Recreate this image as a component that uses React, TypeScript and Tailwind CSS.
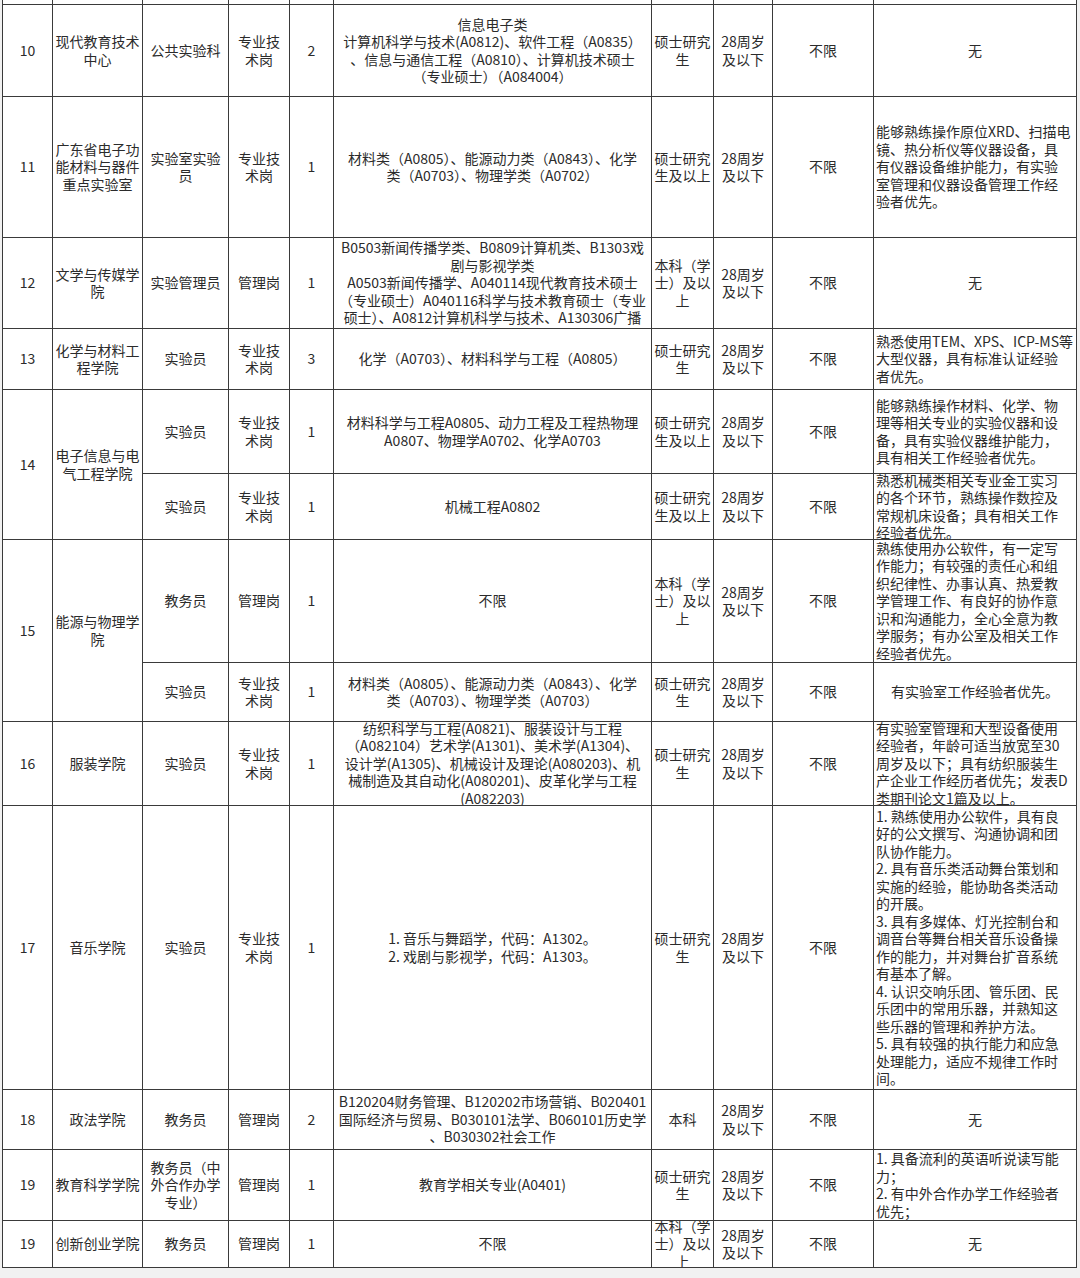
import React from "react";

type Cell = {
  lines: string[];
  align?: "center" | "left";
  span?: number;
};

type Row = Cell[];

const c = (s: string | string[], align: "center" | "left" = "center", span?: number): Cell => ({
  lines: Array.isArray(s) ? s : [s],
  align,
  span,
});

const JS = ["专业技", "术岗"];
const GL = ["管理岗"];
const SS = ["硕士研究", "生"];
const SSU = ["硕士研究", "生及以上"];
const BK = ["本科（学", "士）及以", "上"];
const AGE = ["28周岁", "及以下"];

// rows: for rowspan handling, we build explicit grid placements
type Placed = { row: number; col: number; cell: Cell };

const placed: Placed[] = [];
const put = (row: number, col: number, cell: Cell) => placed.push({ row, col, cell });

// grid rows: 1 = top sliver, 2.. = data rows
const simple = (row: number, cells: Cell[]) => cells.forEach((cell, i) => put(row, i + 1, cell));

simple(2, [
  c("10"),
  c(["现代教育技术", "中心"]),
  c("公共实验科"),
  c(JS),
  c("2"),
  c(["信息电子类", "计算机科学与技术(A0812)、软件工程（A0835）", "、信息与通信工程（A0810）、计算机技术硕士", "（专业硕士）（A084004）"]),
  c(SS),
  c(AGE),
  c("不限"),
  c("无"),
]);
simple(3, [
  c("11"),
  c(["广东省电子功", "能材料与器件", "重点实验室"]),
  c(["实验室实验", "员"]),
  c(JS),
  c("1"),
  c(["材料类（A0805）、能源动力类（A0843）、化学", "类（A0703）、物理学类（A0702）"]),
  c(SSU),
  c(AGE),
  c("不限"),
  c(["能够熟练操作原位XRD、扫描电", "镜、热分析仪等仪器设备，具", "有仪器设备维护能力，有实验", "室管理和仪器设备管理工作经", "验者优先。"], "left"),
]);
simple(4, [
  c("12"),
  c(["文学与传媒学", "院"]),
  c("实验管理员"),
  c(GL),
  c("1"),
  c(["B0503新闻传播学类、B0809计算机类、B1303戏", "剧与影视学类", "A0503新闻传播学、A040114现代教育技术硕士", "（专业硕士）A040116科学与技术教育硕士（专业", "硕士）、A0812计算机科学与技术、A130306广播"]),
  c(["本科（学", "士）及以", "上"]),
  c(AGE),
  c("不限"),
  c("无"),
]);
simple(5, [
  c("13"),
  c(["化学与材料工", "程学院"]),
  c("实验员"),
  c(JS),
  c("3"),
  c("化学（A0703）、材料科学与工程（A0805）"),
  c(SS),
  c(AGE),
  c("不限"),
  c(["熟悉使用TEM、XPS、ICP-MS等", "大型仪器，具有标准认证经验", "者优先。"], "left"),
]);
// row 14 (grid rows 6-7)
put(6, 1, c("14", "center", 2));
put(6, 2, c(["电子信息与电", "气工程学院"], "center", 2));
[
  c("实验员"),
  c(JS),
  c("1"),
  c(["材料科学与工程A0805、动力工程及工程热物理", "A0807、物理学A0702、化学A0703"]),
  c(SSU),
  c(AGE),
  c("不限"),
  c(["能够熟练操作材料、化学、物", "理等相关专业的实验仪器和设", "备，具有实验仪器维护能力，", "具有相关工作经验者优先。"], "left"),
].forEach((cell, i) => put(6, i + 3, cell));
[
  c("实验员"),
  c(JS),
  c("1"),
  c("机械工程A0802"),
  c(SSU),
  c(AGE),
  c("不限"),
  c(["熟悉机械类相关专业金工实习", "的各个环节，熟练操作数控及", "常规机床设备；具有相关工作", "经验者优先。"], "left"),
].forEach((cell, i) => put(7, i + 3, cell));
// row 15 (grid rows 8-9)
put(8, 1, c("15", "center", 2));
put(8, 2, c(["能源与物理学", "院"], "center", 2));
[
  c("教务员"),
  c(GL),
  c("1"),
  c("不限"),
  c(BK),
  c(AGE),
  c("不限"),
  c(["熟练使用办公软件，有一定写", "作能力；有较强的责任心和组", "织纪律性、办事认真、热爱教", "学管理工作、有良好的协作意", "识和沟通能力，全心全意为教", "学服务；有办公室及相关工作", "经验者优先。"], "left"),
].forEach((cell, i) => put(8, i + 3, cell));
[
  c("实验员"),
  c(JS),
  c("1"),
  c(["材料类（A0805）、能源动力类（A0843）、化学", "类（A0703）、物理学类（A0703）"]),
  c(SS),
  c(AGE),
  c("不限"),
  c("有实验室工作经验者优先。"),
].forEach((cell, i) => put(9, i + 3, cell));
simple(10, [
  c("16"),
  c("服装学院"),
  c("实验员"),
  c(JS),
  c("1"),
  c(["纺织科学与工程(A0821)、服装设计与工程", "（A082104）艺术学(A1301)、美术学(A1304)、", "设计学(A1305)、机械设计及理论(A080203)、机", "械制造及其自动化(A080201)、皮革化学与工程", "(A082203)"]),
  c(SS),
  c(AGE),
  c("不限"),
  c(["有实验室管理和大型设备使用", "经验者，年龄可适当放宽至30", "周岁及以下；具有纺织服装生", "产企业工作经历者优先；发表D", "类期刊论文1篇及以上。"], "left"),
]);
simple(11, [
  c("17"),
  c("音乐学院"),
  c("实验员"),
  c(JS),
  c("1"),
  c(["1. 音乐与舞蹈学，代码：A1302。", "2. 戏剧与影视学，代码：A1303。"]),
  c(SS),
  c(AGE),
  c("不限"),
  c([
    "1. 熟练使用办公软件，具有良",
    "好的公文撰写、沟通协调和团",
    "队协作能力。",
    "2. 具有音乐类活动舞台策划和",
    "实施的经验，能协助各类活动",
    "的开展。",
    "3. 具有多媒体、灯光控制台和",
    "调音台等舞台相关音乐设备操",
    "作的能力，并对舞台扩音系统",
    "有基本了解。",
    "4. 认识交响乐团、管乐团、民",
    "乐团中的常用乐器，并熟知这",
    "些乐器的管理和养护方法。",
    "5. 具有较强的执行能力和应急",
    "处理能力，适应不规律工作时",
    "间。",
  ], "left"),
]);
simple(12, [
  c("18"),
  c("政法学院"),
  c("教务员"),
  c(GL),
  c("2"),
  c(["B120204财务管理、B120202市场营销、B020401", "国际经济与贸易、B030101法学、B060101历史学", "、B030302社会工作"]),
  c("本科"),
  c(AGE),
  c("不限"),
  c("无"),
]);
simple(13, [
  c("19"),
  c("教育科学学院"),
  c(["教务员（中", "外合作办学", "专业）"]),
  c(GL),
  c("1"),
  c("教育学相关专业(A0401)"),
  c(SS),
  c(AGE),
  c("不限"),
  c(["1. 具备流利的英语听说读写能", "力；", "2. 有中外合作办学工作经验者", "优先；"], "left"),
]);
simple(14, [
  c("19"),
  c("创新创业学院"),
  c("教务员"),
  c(GL),
  c("1"),
  c("不限"),
  c(BK),
  c(AGE),
  c("不限"),
  c("无"),
]);

const colClass = [
  "col-start-1",
  "col-start-2",
  "col-start-3",
  "col-start-4",
  "col-start-5",
  "col-start-6",
  "col-start-7",
  "col-start-8",
  "col-start-9",
  "col-start-10",
];
const rowClass: Record<number, string> = {
  1: "row-start-1",
  2: "row-start-2",
  3: "row-start-3",
  4: "row-start-4",
  5: "row-start-5",
  6: "row-start-6",
  7: "row-start-7",
  8: "row-start-8",
  9: "row-start-9",
  10: "row-start-10",
  11: "row-start-11",
  12: "row-start-12",
  13: "row-start-13",
  14: "row-start-14",
};

export default function App() {
  return (
    <div
      className="min-h-[1278px] w-[1080px] bg-[#f1f1f1] pl-[2px]"
      style={{ fontFamily: '"Noto Sans CJK SC", "Noto Sans", sans-serif' }}
    >
      <div
        className="grid w-fit gap-px bg-[#3a3a3a] px-px pb-px text-[14px] leading-[17.5px] text-[#2b2b2b]"
        style={{
          gridTemplateColumns: "49px 89px 85px 60px 43px 317px 61px 58px 100px 202px",
          gridTemplateRows: "4px 91px 140px 90px 60px 83px 65px 122px 58px 83px 283px 59px 70px 46px",
        }}
      >
        {colClass.map((cc, i) => (
          <div key={"top" + i} className={`bg-white row-start-1 ${cc}`} />
        ))}
        {placed.map(({ row, col, cell }, i) => (
          <div
            key={i}
            className={`${rowClass[row]} ${colClass[col - 1]} ${cell.span === 2 ? "row-span-2" : ""} flex items-center overflow-hidden bg-white ${
              cell.align === "left" ? "justify-start pl-[2px] text-left" : "justify-center text-center"
            }`}
          >
            <div className="flex flex-col">
              {cell.lines.map((l, j) => (
                <span key={j} className="whitespace-nowrap">
                  {l}
                </span>
              ))}
            </div>
          </div>
        ))}
      </div>
    </div>
  );
}
